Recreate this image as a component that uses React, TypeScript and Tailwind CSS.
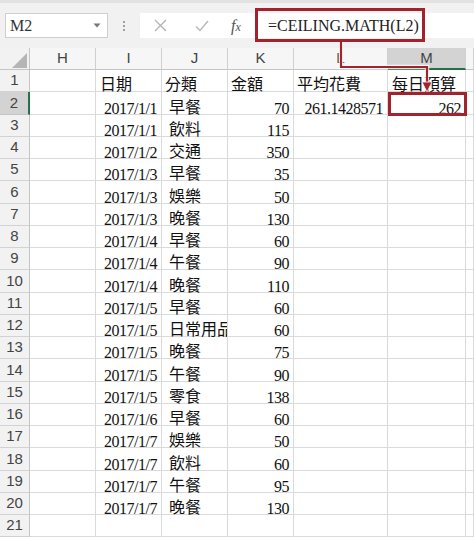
import React from "react";

type Row = { date: string; cat: string; amt: string };

const rows: Row[] = [
  { date: "2017/1/1", cat: "早餐", amt: "70" },
  { date: "2017/1/1", cat: "飲料", amt: "115" },
  { date: "2017/1/2", cat: "交通", amt: "350" },
  { date: "2017/1/3", cat: "早餐", amt: "35" },
  { date: "2017/1/3", cat: "娛樂", amt: "50" },
  { date: "2017/1/3", cat: "晚餐", amt: "130" },
  { date: "2017/1/4", cat: "早餐", amt: "60" },
  { date: "2017/1/4", cat: "午餐", amt: "90" },
  { date: "2017/1/4", cat: "晚餐", amt: "110" },
  { date: "2017/1/5", cat: "早餐", amt: "60" },
  { date: "2017/1/5", cat: "日常用品", amt: "60" },
  { date: "2017/1/5", cat: "晚餐", amt: "75" },
  { date: "2017/1/5", cat: "午餐", amt: "90" },
  { date: "2017/1/5", cat: "零食", amt: "138" },
  { date: "2017/1/6", cat: "早餐", amt: "60" },
  { date: "2017/1/7", cat: "娛樂", amt: "50" },
  { date: "2017/1/7", cat: "飲料", amt: "60" },
  { date: "2017/1/7", cat: "午餐", amt: "95" },
  { date: "2017/1/7", cat: "晚餐", amt: "130" },
];

const cols = ["H", "I", "J", "K", "L", "M", ""];

const serif = { fontFamily: '"Liberation Serif", "Noto Sans CJK TC", serif' };
const cjk = { fontFamily: '"Noto Sans CJK TC", "Liberation Serif", sans-serif' };
const sans = { fontFamily: '"Liberation Sans", Arial, sans-serif' };

const cell = "border-r border-b border-[#dadada] whitespace-nowrap flex items-end";

function Num({ v }: { v: string }) {
  return (
    <div className={cell + " justify-end pr-[4px]"}>
      <span className="text-[16px] leading-[10px] tracking-[-0.5px] text-[#111]" style={serif}>
        {v}
      </span>
    </div>
  );
}

function Txt({ v, pad = "pl-[4px]" }: { v: string; pad?: string }) {
  // long labels get cut at the next filled cell, as in the sheet
  const clip = v.length > 3;
  return (
    <div className={cell + " " + pad + (clip ? " overflow-x-clip" : "")}>
      <span className="text-[16px] leading-none text-[#111]" style={cjk}>
        {v}
      </span>
    </div>
  );
}

function Empty() {
  return <div className={cell} />;
}

function RowHead({ n, active }: { n: number; active?: boolean }) {
  return (
    <div
      className={
        "flex items-center justify-center border-b text-[15px] text-[#444] " +
        (active
          ? "bg-[#d3d3d3] border-[#c4c4c4] border-r-2 border-r-[#217346]"
          : "bg-[#f2f2f2] border-[#d2d2d2] border-r border-r-[#c4c4c4]")
      }
      style={sans}
    >
      {n}
    </div>
  );
}

export default function App() {
  return (
    <div className="relative w-[474px] h-[538px] overflow-hidden bg-white">
      {/* formula bar */}
      <div className="h-[48px] bg-[#f1f1f1] border-t-[3px] border-[#e2e2e2] flex items-start pt-[10px]">
        <div className="ml-[5px] w-[103px] h-[25px] bg-white border border-[#cfcfcf] flex items-center justify-between pl-[4px] pr-[6px]">
          <span className="text-[16px] text-[#333]" style={serif}>
            M2
          </span>
          <svg width="8" height="5" viewBox="0 0 8 5">
            <path d="M0.5 0.5 L7.5 0.5 L4 4.5 Z" fill="#777" />
          </svg>
        </div>
        <div className="w-[32px] h-[25px] flex flex-col items-center justify-center gap-[2px]">
          <span className="w-[2px] h-[2px] bg-[#a0a0a0]" />
          <span className="w-[2px] h-[2px] bg-[#a0a0a0]" />
          <span className="w-[2px] h-[2px] bg-[#a0a0a0]" />
        </div>
        <div className="w-[115px] h-[25px] bg-white flex items-center">
          <svg className="ml-[14px]" width="13" height="13" viewBox="0 0 13 13">
            <path d="M1 1 L12 12 M12 1 L1 12" stroke="#b3b3b3" strokeWidth="1.3" />
          </svg>
          <svg className="ml-[28px]" width="14" height="12" viewBox="0 0 14 12">
            <path d="M1 6.5 L5 10.5 L13 1" stroke="#b8b8b8" strokeWidth="1.4" fill="none" />
          </svg>
          <span className="ml-[22px] text-[16px] italic text-[#555]" style={serif}>
            f<span className="text-[12px]">x</span>
          </span>
        </div>
        <div className="flex-1 h-[25px] bg-white flex items-center pl-[13px]">
          <span className="text-[16px] text-[#222]" style={serif}>
            =CEILING.MATH(L2)
          </span>
        </div>
      </div>

      {/* grid */}
      <div className="grid grid-cols-[30px_66px_66px_66px_66px_94px_78px_1fr] grid-rows-[22px] auto-rows-[22.25px]">
        {/* corner */}
        <div className="relative bg-[#f2f2f2] border-r border-b border-[#c4c4c4]">
          <svg className="absolute left-[12px] top-[5px]" width="15" height="15" viewBox="0 0 15 15">
            <path d="M15 0 L15 15 L0 15 Z" fill="#b5b5b5" />
          </svg>
        </div>
        {cols.map((c, i) => (
          <div
            key={i}
            className={
              "flex items-center justify-center text-[15px] text-[#444] border-r border-[#d0d0d0] " +
              (c === "M"
                ? "bg-[#d3d3d3] border-b-2 border-b-[#217346]"
                : "bg-[#f6f6f6] border-b border-b-[#c4c4c4]")
            }
            style={sans}
          >
            {c}
          </div>
        ))}

        {/* row 1 */}
        <RowHead n={1} />
        <Empty />
        <Txt v="日期" />
        <Txt v="分類" pad="pl-[3px]" />
        <Txt v="金額" pad="pl-[3px]" />
        <div className={cell + " pl-[3px]"}>
          <span className="text-[16px] leading-none text-[#111]" style={cjk}>
            平均花費
          </span>
        </div>
        <div className={cell + " pl-[4px]"}>
          <span className="text-[16px] leading-none text-[#111]" style={cjk}>
            每日預算
          </span>
        </div>
        <Empty />

        {rows.map((r, i) => (
          <React.Fragment key={i}>
            <RowHead n={i + 2} active={i === 0} />
            <Empty />
            <Num v={r.date} />
            <Txt v={r.cat} pad="pl-[7px]" />
            <Num v={r.amt} />
            {i === 0 ? <Num v="261.1428571" /> : <Empty />}
            {i === 0 ? <Num v="262" /> : <Empty />}
            <Empty />
          </React.Fragment>
        ))}

        {/* row 21 */}
        <RowHead n={21} />
        <Empty />
        <Empty />
        <Empty />
        <Empty />
        <Empty />
        <Empty />
        <Empty />
      </div>

      {/* annotation overlay */}
      <div className="absolute left-[255px] top-[8px] w-[170px] h-[34px] border-[3px] border-[#a3222b]" />
      <div className="absolute left-[388px] top-[92px] w-[79px] h-[24px] border-[3px] border-[#a3222b]" />
      <svg className="absolute left-0 top-0 pointer-events-none" width="474" height="120" viewBox="0 0 474 120">
        <path d="M341 42 L341 67 L427 67 L427 84" fill="none" stroke="#ffffff" strokeWidth="4.5" strokeOpacity="0.8" />
        <path d="M341 42 L341 67 L427 67 L427 84" fill="none" stroke="#a3222b" strokeWidth="2.2" />
        <path d="M422 82 L432 82 L427 92 Z" fill="#a3222b" stroke="#ffffff" strokeWidth="0.8" />
      </svg>
    </div>
  );
}
